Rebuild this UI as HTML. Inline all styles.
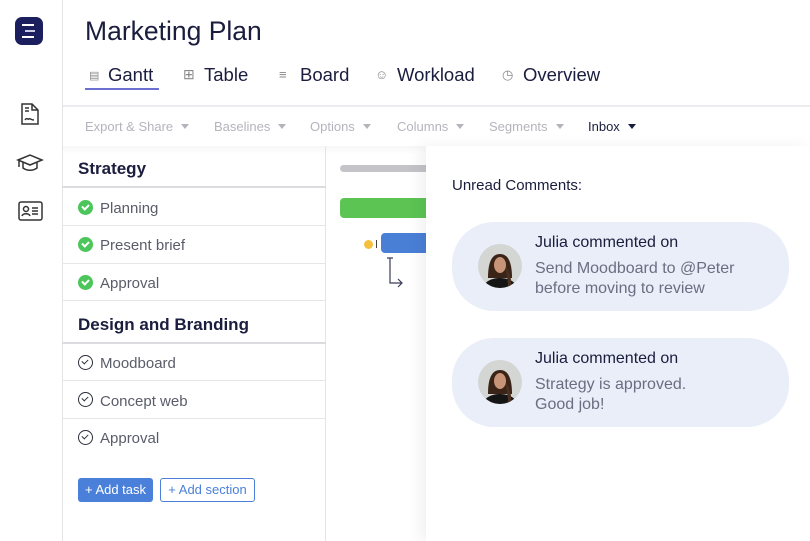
<!DOCTYPE html>
<html><head><meta charset="utf-8"><style>
*{margin:0;padding:0;box-sizing:border-box}
body{width:810px;height:541px;overflow:hidden;background:#fff;font-family:"Liberation Sans",sans-serif;position:relative;color:#1a1d3d}
.a{position:absolute;white-space:nowrap}
.tab{font-size:18.5px;top:64px;color:#1a1d3d}
.ti{top:67px;font-size:13px;color:#888}
.tb{font-size:13px;top:119px;color:#b4b4bc}
.tb i{display:inline-block;width:0;height:0;border-left:4px solid transparent;border-right:4px solid transparent;border-top:5px solid #b4b4bc;margin-left:8px;vertical-align:2px}
.row{position:absolute;left:62px;width:264px;height:1px;background:#e6e6ea}
.item{position:absolute;left:100px;font-size:15px;color:#5a5c6a}
.gc{position:absolute;left:78px;width:15px;height:15px;border-radius:50%;background:#4cc65a}
.gc:after{content:"";position:absolute;left:4px;top:3.5px;width:5px;height:3px;border-left:2px solid #fff;border-bottom:2px solid #fff;transform:rotate(-45deg)}
.oc{position:absolute;left:78px;width:15px;height:15px;border-radius:50%;border:1.4px solid #2a2c3a}
.oc:after{content:"";position:absolute;left:3px;top:3px;width:5px;height:3px;border-left:1.4px solid #2a2c3a;border-bottom:1.4px solid #2a2c3a;transform:rotate(-45deg)}
.card{position:absolute;left:452px;width:337px;height:89px;border-radius:42px;background:#e9eef8}
.card .h{position:absolute;left:83px;top:12px;font-size:16px;color:#1a1d3d}
.card .t{position:absolute;left:83px;top:37px;font-size:16px;color:#6a6e82;line-height:20px}
.card svg{position:absolute;left:26px;top:22px}
</style></head><body>
<div class="a" style="left:62px;top:0;width:1px;height:541px;background:#e4e4e8"></div>
<div class="a" style="left:15px;top:17px;width:28px;height:28px;border-radius:7px;background:#1b1f5e"></div>
<div class="a" style="left:22px;top:24px;width:12px;height:2px;background:#fff"></div>
<div class="a" style="left:25px;top:30px;width:10px;height:2px;background:#c8cbe8"></div>
<div class="a" style="left:22px;top:36px;width:12px;height:2px;background:#fff"></div>
<svg class="a" style="left:20px;top:102px" width="20" height="24" viewBox="0 0 20 24" fill="none" stroke="#333" stroke-width="1.5"><path d="M2 2h10l6 6v14H2z M12 2v6h6"/><path d="M5 6h4M5 9h4M5 18c2-3 3 0 4-1s2 1 5 1"/></svg>
<svg class="a" style="left:16px;top:152px" width="28" height="24" viewBox="0 0 28 24" fill="none" stroke="#333" stroke-width="1.5"><path d="M2 8l12-5 12 5-12 5z M7 10v6c4 3 10 3 14 0v-6 M3 8v7"/></svg>
<svg class="a" style="left:18px;top:201px" width="25" height="20" viewBox="0 0 25 20" fill="none" stroke="#333" stroke-width="1.5"><rect x="1" y="1" width="23" height="18" rx="2"/><circle cx="8" cy="8" r="2.5"/><path d="M4 15c1-3 7-3 8 0M14 7h6M14 10h6M14 13h6"/></svg>
<div class="a" style="left:85px;top:16px;font-size:26.5px;color:#1a1d3d">Marketing Plan</div>
<div class="a ti" style="left:89px;font-size:11px;top:69px">&#9636;</div><div class="a tab" style="left:108px">Gantt</div>
<div class="a" style="left:85px;top:88px;width:74px;height:2px;background:#6b6fd0"></div>
<div class="a ti" style="left:183px;font-size:14px;top:66px">&#8862;</div><div class="a tab" style="left:204px">Table</div>
<div class="a ti" style="left:279px">&#8801;</div><div class="a tab" style="left:300px">Board</div>
<div class="a ti" style="left:375px">&#9786;</div><div class="a tab" style="left:397px">Workload</div>
<div class="a ti" style="left:502px">&#9719;</div><div class="a tab" style="left:523px">Overview</div>
<div class="a" style="left:63px;top:105px;width:747px;height:2px;background:#ececf0"></div>
<div class="a tb" style="left:85px">Export &amp; Share<i></i></div>
<div class="a tb" style="left:214px">Baselines<i></i></div>
<div class="a tb" style="left:310px">Options<i></i></div>
<div class="a tb" style="left:397px">Columns<i></i></div>
<div class="a tb" style="left:489px">Segments<i></i></div>
<div class="a tb" style="left:588px;color:#1a1d3d">Inbox<i style="border-top-color:#1a1d3d"></i></div>
<div class="a" style="left:63px;top:146px;width:747px;height:8px;background:linear-gradient(#f6f6f8,#fff)"></div>
<div class="a" style="left:325px;top:146px;width:1px;height:395px;background:#e4e4e8"></div>
<div class="a" style="left:78px;top:159px;font-size:17px;font-weight:bold;color:#1a1d3d">Strategy</div>
<div class="row" style="top:186px;height:2px;background:#dcdce0"></div>
<div class="gc" style="top:200px"></div><div class="item" style="top:200px">Planning</div>
<div class="row" style="top:225px"></div>
<div class="gc" style="top:237px"></div><div class="item" style="top:237px">Present brief</div>
<div class="row" style="top:263px"></div>
<div class="gc" style="top:275px"></div><div class="item" style="top:275px">Approval</div>
<div class="row" style="top:300px"></div>
<div class="a" style="left:78px;top:315px;font-size:17px;font-weight:bold;color:#1a1d3d">Design and Branding</div>
<div class="row" style="top:342px;height:2px;background:#dcdce0"></div>
<div class="oc" style="top:355px"></div><div class="item" style="top:355px">Moodboard</div>
<div class="row" style="top:380px"></div>
<div class="oc" style="top:392px"></div><div class="item" style="top:393px">Concept web</div>
<div class="row" style="top:418px"></div>
<div class="oc" style="top:430px"></div><div class="item" style="top:430px">Approval</div>
<div class="a" style="left:78px;top:478px;width:75px;height:24px;border-radius:3px;background:#4a80d9;color:#fff;font-size:13px;line-height:24px;text-align:center">+ Add task</div>
<div class="a" style="left:160px;top:478px;width:95px;height:24px;border-radius:3px;border:1px solid #4a80d9;color:#4a80d9;font-size:13px;line-height:22px;text-align:center">+ Add section</div>
<div class="a" style="left:340px;top:165px;width:90px;height:7px;border-radius:4px;background:#c4c4c8"></div>
<div class="a" style="left:340px;top:198px;width:90px;height:20px;border-radius:4px;background:#5cc453"></div>
<div class="a" style="left:364px;top:240px;width:9px;height:9px;border-radius:50%;background:#f5c03e"></div>
<div class="a" style="left:376px;top:240px;width:1px;height:8px;background:#444"></div>
<div class="a" style="left:381px;top:233px;width:50px;height:20px;border-radius:4px;background:#4a7fd6"></div>
<svg class="a" style="left:385px;top:257px" width="40" height="32" fill="none" stroke="#3a3d5a" stroke-width="1.2"><path d="M2 1h6M5 1v25h12M13 22l4 4-4 4"/></svg>
<div class="a" style="left:426px;top:146px;width:384px;height:395px;background:#fff;box-shadow:-6px 0 14px rgba(0,0,0,0.06)"></div>
<div class="a" style="left:452px;top:177px;font-size:15px;color:#1a1d3d">Unread Comments:</div>
<svg width="0" height="0" style="position:absolute"><defs><g id="av"><circle cx="22" cy="22" r="22" fill="#d4d6d3"/><clipPath id="cp"><circle cx="22" cy="22" r="22"/></clipPath><g clip-path="url(#cp)"><path d="M10 34c0-14 3-24 12-24s12 10 12 24z" fill="#3a2418"/><ellipse cx="22" cy="21" rx="6" ry="8" fill="#c89478"/><path d="M4 46c2-9 10-12 18-12s16 3 18 12z" fill="#151515"/><path d="M28 22c3 6 6 12 5 20l-3 0c0-6-2-12-2-20z" fill="#4a3020"/></g></g></defs></svg>
<div class="card" style="top:222px"><svg width="44" height="44"><use href="#av"/></svg><div class="h">Julia commented on</div><div class="t">Send Moodboard to @Peter<br>before moving to review</div></div>
<div class="card" style="top:338px"><svg width="44" height="44"><use href="#av"/></svg><div class="h">Julia commented on</div><div class="t">Strategy is approved.<br>Good job!</div></div>
</body></html>
